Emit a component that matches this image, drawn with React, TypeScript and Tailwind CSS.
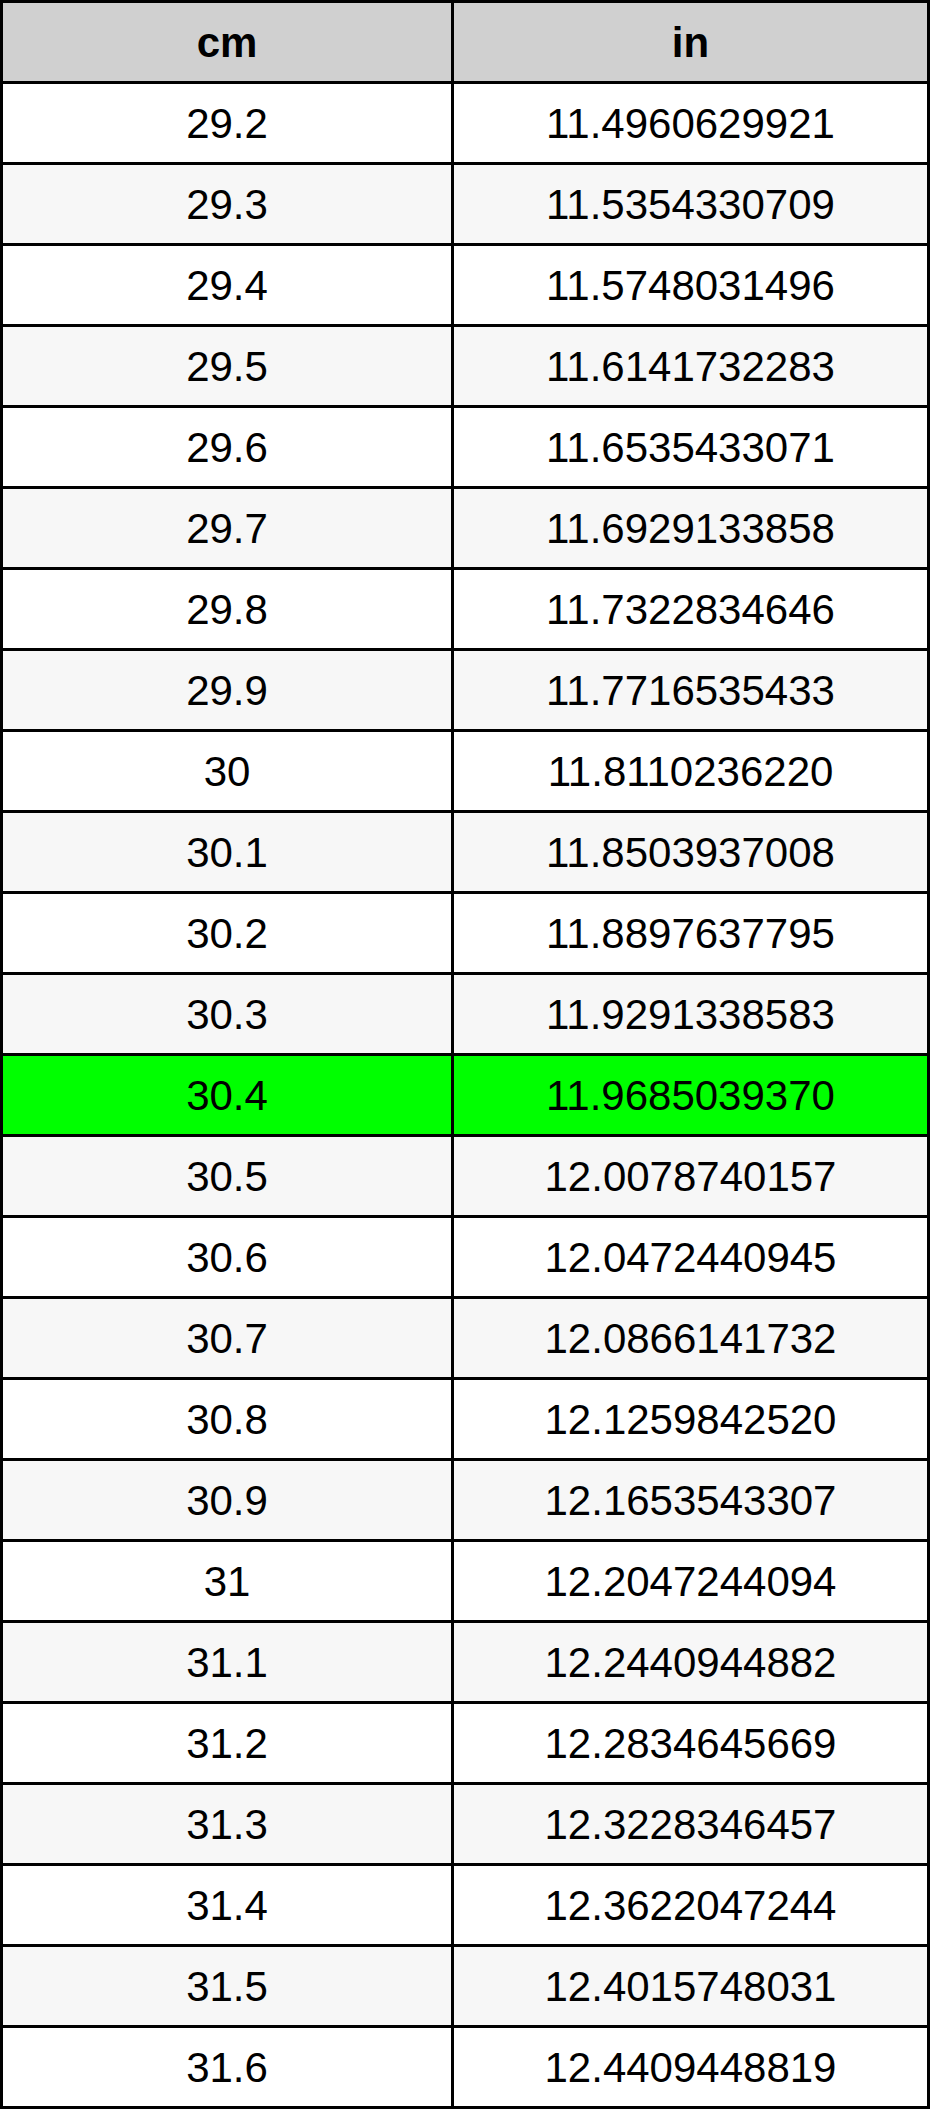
const ROWS: [string, string][] = [
  ["29.2", "11.4960629921"],
  ["29.3", "11.5354330709"],
  ["29.4", "11.5748031496"],
  ["29.5", "11.6141732283"],
  ["29.6", "11.6535433071"],
  ["29.7", "11.6929133858"],
  ["29.8", "11.7322834646"],
  ["29.9", "11.7716535433"],
  ["30", "11.8110236220"],
  ["30.1", "11.8503937008"],
  ["30.2", "11.8897637795"],
  ["30.3", "11.9291338583"],
  ["30.4", "11.9685039370"],
  ["30.5", "12.0078740157"],
  ["30.6", "12.0472440945"],
  ["30.7", "12.0866141732"],
  ["30.8", "12.1259842520"],
  ["30.9", "12.1653543307"],
  ["31", "12.2047244094"],
  ["31.1", "12.2440944882"],
  ["31.2", "12.2834645669"],
  ["31.3", "12.3228346457"],
  ["31.4", "12.3622047244"],
  ["31.5", "12.4015748031"],
  ["31.6", "12.4409448819"],
];

const HIGHLIGHT = "30.4";

function rowBg(cm: string, i: number) {
  if (cm === HIGHLIGHT) return "bg-[#00ff00]";
  return i % 2 === 0 ? "bg-white" : "bg-[#f7f7f7]";
}

export default function App() {
  return (
    <div className="min-h-screen bg-white font-['Liberation_Sans',Arial,sans-serif] text-[42px] text-black">
      <div className="grid w-[930px] grid-cols-[448px_473px] gap-[3px] bg-black p-[3px]">
        <div className="flex h-[78px] items-center justify-center bg-[#d0d0d0] font-bold">cm</div>
        <div className="flex h-[78px] items-center justify-center bg-[#d0d0d0] font-bold">in</div>
        {ROWS.map(([cm, inch], i) => (
          <div key={cm} className="contents">
            <div className={`flex h-[78px] items-center justify-center ${rowBg(cm, i)}`}>{cm}</div>
            <div className={`flex h-[78px] items-center justify-center ${rowBg(cm, i)}`}>{inch}</div>
          </div>
        ))}
      </div>
    </div>
  );
}
